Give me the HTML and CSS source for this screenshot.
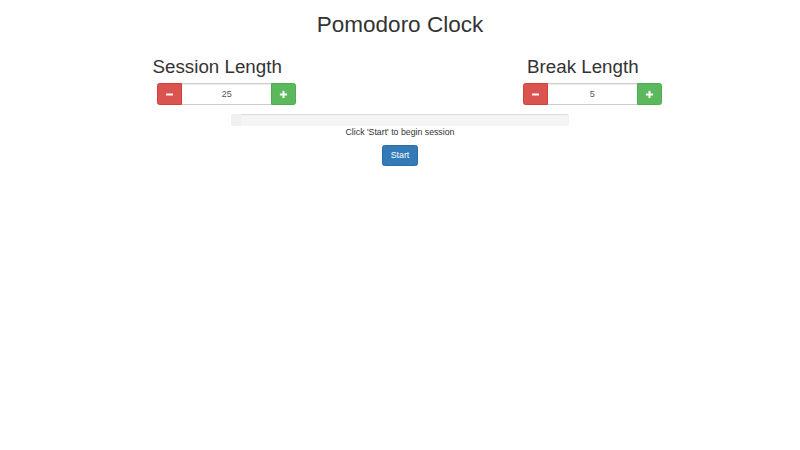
FILE: index.html
```html
<!DOCTYPE html>
<html lang="en">
<head>
<meta charset="utf-8">
<title>Pomodoro Clock</title>
<link rel="stylesheet" href="styles.css">
</head>
<body>
<div class="container">
  <h1 class="title">Pomodoro Clock</h1>
  <div class="row">
    <div class="col">
      <h2 class="label">Session Length</h2>
      <div class="stepper">
        <button class="step step-minus" type="button" aria-label="decrease">
          <svg viewBox="0 0 10 10" width="9" height="9"><rect x="1.2" y="3.9" width="7.6" height="2.2" fill="#fff"/></svg>
        </button>
        <input class="step-value" type="text" value="25">
        <button class="step step-plus" type="button" aria-label="increase">
          <svg viewBox="0 0 10 10" width="9" height="9"><rect x="1" y="3.9" width="8" height="2.2" fill="#fff"/><rect x="3.9" y="1" width="2.2" height="8" fill="#fff"/></svg>
        </button>
      </div>
    </div>
    <div class="col">
      <h2 class="label">Break Length</h2>
      <div class="stepper">
        <button class="step step-minus" type="button" aria-label="decrease">
          <svg viewBox="0 0 10 10" width="9" height="9"><rect x="1.2" y="3.9" width="7.6" height="2.2" fill="#fff"/></svg>
        </button>
        <input class="step-value" type="text" value="5">
        <button class="step step-plus" type="button" aria-label="increase">
          <svg viewBox="0 0 10 10" width="9" height="9"><rect x="1" y="3.9" width="8" height="2.2" fill="#fff"/><rect x="3.9" y="1" width="2.2" height="8" fill="#fff"/></svg>
        </button>
      </div>
    </div>
  </div>
  <div class="progress"><div class="progress-bar"></div></div>
  <p class="status">Click 'Start' to begin session</p>
  <div class="actions"><button class="btn-start" type="button">Start</button></div>
</div>
</body>
</html>
```
FILE: styles.css
```css
* { box-sizing: border-box; }
html, body { margin: 0; padding: 0; background: #fff; }
body {
  font-family: "Liberation Sans", Arial, sans-serif;
  font-size: 8.75px;
  line-height: 12.5px;
  color: #333;
}
.container {
  width: 731.25px;
  margin: 0 auto;
  padding: 0 9.375px;
}
.title {
  margin: 12.5px 0 6.25px;
  font-size: 22.5px;
  line-height: 1.1;
  font-weight: normal;
  text-align: center;
}
.row {
  display: flex;
  margin: 0 -9.375px;
}
.col {
  flex: 1 1 0;
  padding: 0 9.375px;
}
.label {
  margin: 13px 0 6.25px;
  font-size: 18.75px;
  line-height: 1.1;
  font-weight: normal;
  text-align: center;
}
.stepper {
  display: flex;
  width: 139px;
  height: 21.25px;
  margin-left: 113.5px;
}
.step {
  flex: 0 0 25px;
  width: 25px;
  height: 100%;
  padding: 0;
  border: 1px solid;
  display: flex;
  align-items: center;
  justify-content: center;
  cursor: pointer;
}
.step-minus {
  background: #d9534f;
  border-color: #d43f3a;
  border-radius: 2.5px 0 0 2.5px;
}
.step-plus {
  background: #5cb85c;
  border-color: #4cae4c;
  border-radius: 0 2.5px 2.5px 0;
}
.step-value {
  flex: 1 1 auto;
  min-width: 0;
  width: 89px;
  height: 100%;
  margin: 0;
  padding: 0 7.5px;
  border: 1px solid #ccc;
  border-left: 0;
  border-right: 0;
  box-shadow: inset 0 1px 1px rgba(0,0,0,.075);
  font-family: inherit;
  font-size: 9px;
  color: #555;
  text-align: center;
  outline: none;
}
.progress {
  width: 338px;
  height: 12.5px;
  margin: 9px auto 0;
  background: #f5f5f5;
  border-radius: 2.5px;
  box-shadow: inset 0 1px 1px rgba(0,0,0,.1);
  overflow: hidden;
}
.progress-bar {
  width: 10px;
  height: 100%;
  background: #f1f1f1;
}
.status {
  margin: 0 0 6.25px;
  text-align: center;
}
.actions {
  text-align: center;
}
.btn-start {
  display: inline-block;
  padding: 3.4px 7.5px;
  font-family: inherit;
  font-size: 8.75px;
  line-height: 12.5px;
  color: #fff;
  background: #337ab7;
  border: 1px solid #2e6da4;
  border-radius: 2.5px;
  cursor: pointer;
}
```
